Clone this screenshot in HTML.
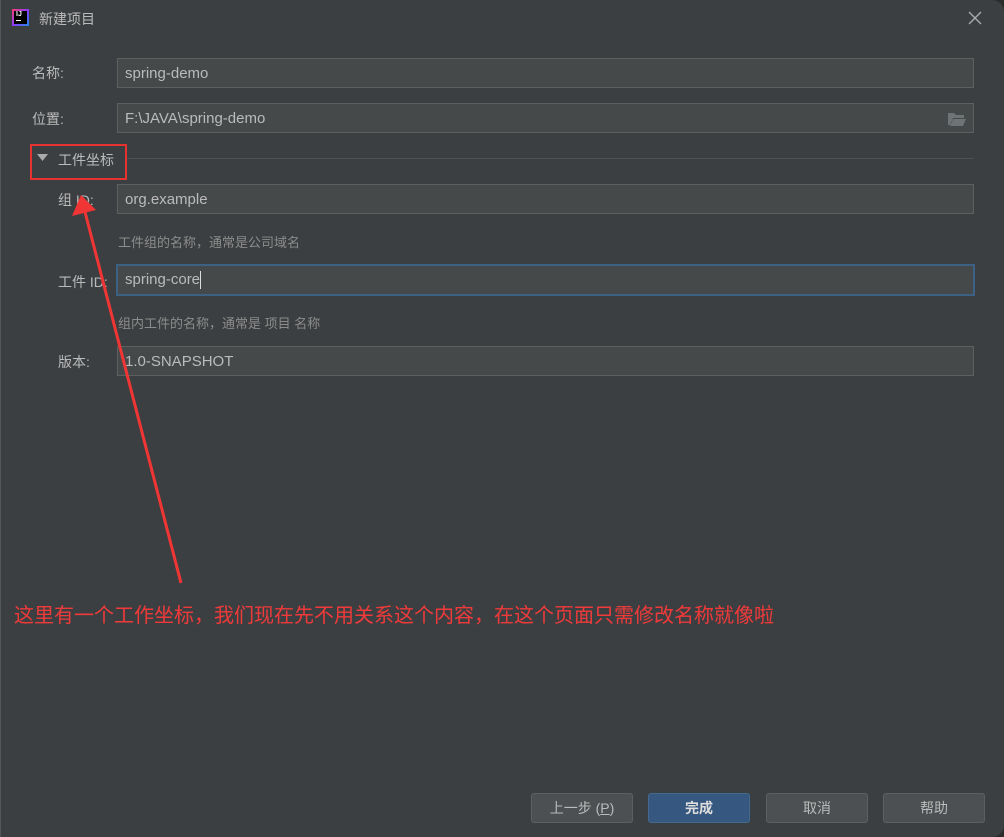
<!DOCTYPE html>
<html><head><meta charset="utf-8"><style>
*{margin:0;padding:0;box-sizing:border-box}
body{width:1004px;height:837px;background:#2b2b2b;overflow:hidden;font-family:"Liberation Sans","Noto Sans CJK SC",sans-serif;font-size:14px;color:#bbbbbb;position:relative}
.win{position:absolute;left:0;top:0;width:1004px;height:837px;background:#3c3f41;border-top-right-radius:12px;border-bottom-right-radius:12px;border-left:1px solid #555}
.abs{position:absolute}
.inp{position:absolute;background:#45494a;border:1px solid #5e6060;height:30px;color:#bbbbbb;font-size:15px;padding-left:7px;line-height:30px}
.lbl{position:absolute;font-size:14px;color:#bbbbbb}
.hint{position:absolute;font-size:13px;color:#8c8c8c}
.btn{position:absolute;top:793px;width:102px;height:30px;background:#4c5052;border:1px solid #5e6060;border-radius:3px;text-align:center;line-height:28px;font-size:14px;color:#bbbbbb}
</style></head><body>
<div class="win">
<div class="abs" style="left:11px;top:9px;width:17px;height:17px;background:linear-gradient(135deg,#ff3b6b,#8b3cff,#1e88e5);padding:2px"><div style="background:#000;width:13px;height:13px;color:#fff;font-size:7px;font-weight:bold;line-height:8px;padding-left:2px">IJ<div style="width:5px;height:1px;background:#fff;margin-top:1px"></div></div></div>
<div class="abs" style="left:38px;top:9px;font-size:14px;color:#bbbbbb">新建项目</div>
<svg class="abs" style="left:966px;top:10px" width="16" height="16"><path d="M2 2L14 14M14 2L2 14" stroke="#aaa" stroke-width="1.4"/></svg>

<div class="lbl" style="left:31px;top:63px">名称:</div>
<div class="inp" style="left:116px;top:58px;width:857px">spring-demo</div>
<div class="lbl" style="left:31px;top:109px">位置:</div>
<div class="inp" style="left:116px;top:103px;width:857px">F:\JAVA\spring-demo</div>
<svg class="abs" style="left:946px;top:111px" width="20" height="16"><path d="M1 2h6l2 2h8v3H6L3 14H1z" fill="#6e7375"/><path d="M6 8h13l-3 7H3z" fill="#6e7375"/></svg>

<div class="abs" style="left:29px;top:144px;width:97px;height:36px;border:2px solid #e8322f"></div>
<svg class="abs" style="left:36px;top:154px" width="12" height="8"><path d="M0 0h11L5.5 7z" fill="#aaa"/></svg>
<div class="abs" style="left:57px;top:150px;font-size:14px">工件坐标</div>
<div class="abs" style="left:126px;top:158px;width:847px;height:1px;background:#4e5254"></div>

<div class="lbl" style="left:57px;top:190px">组 ID:</div>
<div class="inp" style="left:116px;top:184px;width:857px">org.example</div>
<div class="hint" style="left:117px;top:232px">工件组的名称，通常是公司域名</div>
<div class="lbl" style="left:57px;top:272px">工件 ID:</div>
<div class="inp" style="left:115px;top:264px;width:859px;height:32px;border:2px solid #3d6185;line-height:28px">spring-core<span style="display:inline-block;width:1px;height:18px;background:#ddd;vertical-align:middle"></span></div>
<div class="hint" style="left:117px;top:313px">组内工件的名称，通常是 项目 名称</div>
<div class="lbl" style="left:57px;top:352px">版本:</div>
<div class="inp" style="left:116px;top:346px;width:857px">1.0-SNAPSHOT</div>

<svg class="abs" style="left:0;top:0" width="1004" height="837"><line x1="180" y1="583" x2="84" y2="212" stroke="#f03535" stroke-width="3"/><path d="M80 195L71 216L95 210z" fill="#f03535"/></svg>
<div class="abs" style="left:13px;top:599px;font-size:20px;letter-spacing:0px;color:#f03a3a;white-space:nowrap">这里有一个工作坐标，我们现在先不用关系这个内容，在这个页面只需修改名称就像啦</div>

<div class="btn" style="left:530px">上一步 (<u>P</u>)</div>
<div class="btn" style="left:647px;background:#365880;border-color:#43698f;color:#ddd;font-weight:bold">完成</div>
<div class="btn" style="left:765px">取消</div>
<div class="btn" style="left:882px">帮助</div>
</div>
</body></html>
